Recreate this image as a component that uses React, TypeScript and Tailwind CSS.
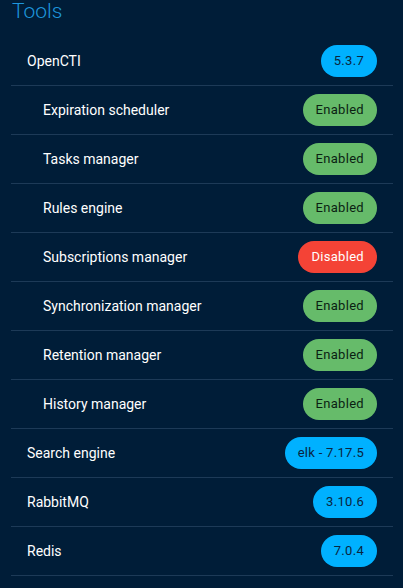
import React from "react";

type Row = { label: string; value: string; kind: "blue" | "green" | "red"; nested?: boolean };

const rows: Row[] = [
  { label: "OpenCTI", value: "5.3.7", kind: "blue" },
  { label: "Expiration scheduler", value: "Enabled", kind: "green", nested: true },
  { label: "Tasks manager", value: "Enabled", kind: "green", nested: true },
  { label: "Rules engine", value: "Enabled", kind: "green", nested: true },
  { label: "Subscriptions manager", value: "Disabled", kind: "red", nested: true },
  { label: "Synchronization manager", value: "Enabled", kind: "green", nested: true },
  { label: "Retention manager", value: "Enabled", kind: "green", nested: true },
  { label: "History manager", value: "Enabled", kind: "green", nested: true },
  { label: "Search engine", value: "elk - 7.17.5", kind: "blue" },
  { label: "RabbitMQ", value: "3.10.6", kind: "blue" },
  { label: "Redis", value: "7.0.4", kind: "blue" },
];

function Chip({ value, kind }: { value: string; kind: Row["kind"] }) {
  const cls =
    kind === "blue"
      ? "bg-[#00b1ff] text-[#0a2540]"
      : kind === "green"
      ? "bg-[#66bb6a] text-[#0b1f12]"
      : "bg-[#f44336] text-white";
  return (
    <span
      className={`inline-flex items-center h-[32px] px-[13px] rounded-full text-[13px] tracking-[0.3px] ${cls}`}
    >
      {value}
    </span>
  );
}

export default function App() {
  return (
    <div
      className="w-[403px] h-[588px] overflow-hidden bg-[#001d38] text-white"
      style={{ fontFamily: "Roboto, 'Noto Sans', sans-serif" }}
    >
      <h1 className="pl-[12px] text-[21px] leading-[22px] font-light text-[#1e96dc]">Tools</h1>
      <div className="mt-[15px] pl-[11px] pr-[10px]">
        {rows.map((r) => (
          <div
            key={r.label}
            className={`flex items-center justify-between h-[49px] border-b border-[#1d3a57] pr-[16px] ${
              r.nested ? "pl-[32px]" : "pl-[16px]"
            }`}
          >
            <span className="text-[14px]">{r.label}</span>
            <Chip value={r.value} kind={r.kind} />
          </div>
        ))}
      </div>
    </div>
  );
}
